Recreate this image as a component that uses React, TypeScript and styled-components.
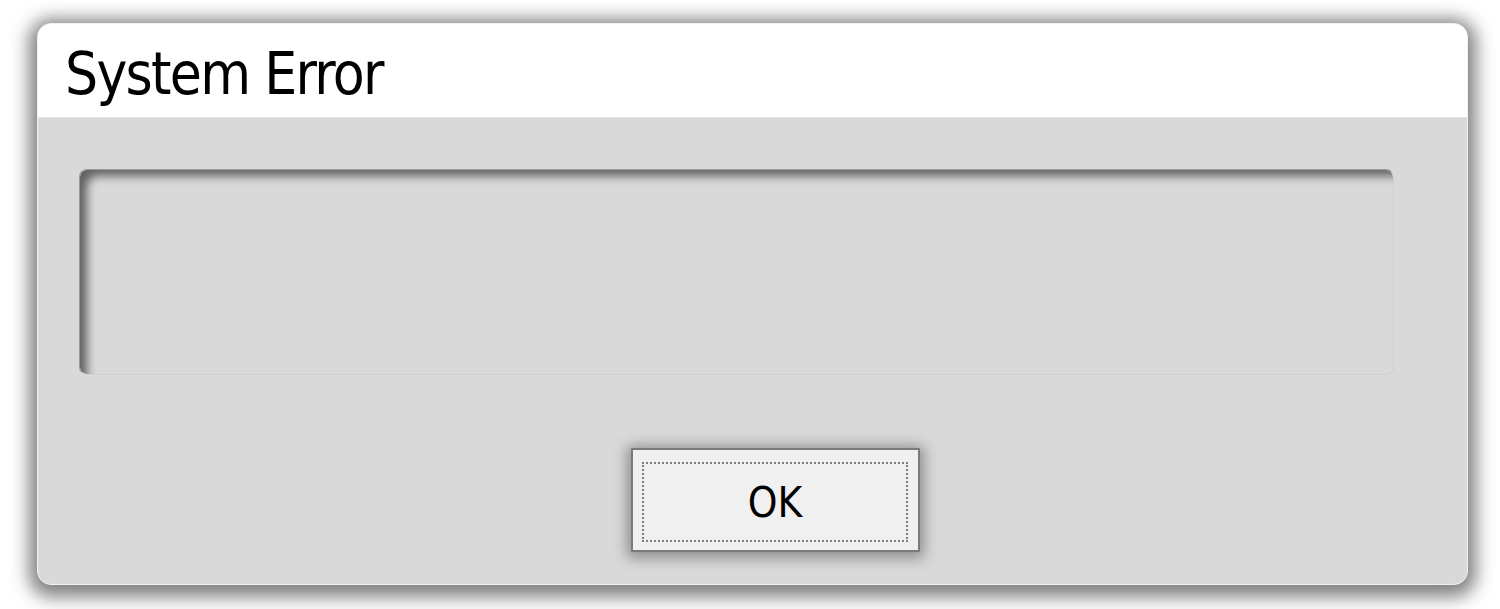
import React from "react";
import styled, { createGlobalStyle } from "styled-components";

const GlobalStyle = createGlobalStyle`
  html, body {
    margin: 0;
    padding: 0;
    background: #ffffff;
  }
  body {
    font-family: Tahoma, "DejaVu Sans", "Liberation Sans", sans-serif;
  }
`;

const Page = styled.div`
  width: 1500px;
  height: 609px;
  padding: 23px 0 0 37px;
  box-sizing: border-box;
`;

const Window = styled.div`
  width: 1431px;
  height: 562px;
  border-radius: 14px;
  background: #d9d9d9;
  border: 1px solid #f2f2f2;
  box-sizing: border-box;
  box-shadow: 0 4px 18px 8px rgba(0, 0, 0, 0.5);
  overflow: hidden;
  display: flex;
  flex-direction: column;
`;

const TitleBar = styled.div`
  height: 94px;
  background: #ffffff;
  border-bottom: 1px solid #e4e4e4;
  padding: 0 0 0 27px;
  display: flex;
  align-items: center;
  box-sizing: border-box;
`;

const Title = styled.h1`
  margin: 7px 0 0;
  font-weight: normal;
  font-size: 58px;
  letter-spacing: -1.7px;
  color: #000;
  font-family: "DejaVu Sans Condensed", "DejaVu Sans", sans-serif;
`;

const Body = styled.div`
  flex: 1;
  display: flex;
  flex-direction: column;
  padding: 51px 73px 32px 41px;
`;

const MessageWell = styled.div`
  height: 206px;
  border-radius: 8px;
  border: 1px solid #cfcfcf;
  border-top-color: #9a9a9a;
  border-left-color: #9a9a9a;
  background: #d9d9d9;
  box-shadow: inset 11px 10px 10px -4px rgba(0, 0, 0, 0.55);
  box-sizing: border-box;
`;

const ButtonRow = styled.div`
  margin-top: 73px;
  display: flex;
  justify-content: center;
  padding-left: 78px;
`;

const OkButton = styled.button`
  width: 289px;
  height: 104px;
  background: #f0f0f0;
  border: 2px solid #7a7a7a;
  border-radius: 1px;
  box-shadow: 0 2px 14px 4px rgba(0, 0, 0, 0.35);
  padding: 12px 10px 8px 9px;
  box-sizing: border-box;
  cursor: pointer;
`;

const FocusRing = styled.span`
  display: flex;
  align-items: center;
  justify-content: center;
  width: 100%;
  height: 100%;
  border: 2px dotted #7f7f7f;
  box-sizing: border-box;
  font-family: "DejaVu Sans Condensed", "DejaVu Sans", sans-serif;
  font-size: 42px;
  color: #000;
`;

export default function App() {
  return (
    <>
      <GlobalStyle />
      <Page>
        <Window>
          <TitleBar>
            <Title>System Error</Title>
          </TitleBar>
          <Body>
            <MessageWell />
            <ButtonRow>
              <OkButton type="button">
                <FocusRing>OK</FocusRing>
              </OkButton>
            </ButtonRow>
          </Body>
        </Window>
      </Page>
    </>
  );
}
